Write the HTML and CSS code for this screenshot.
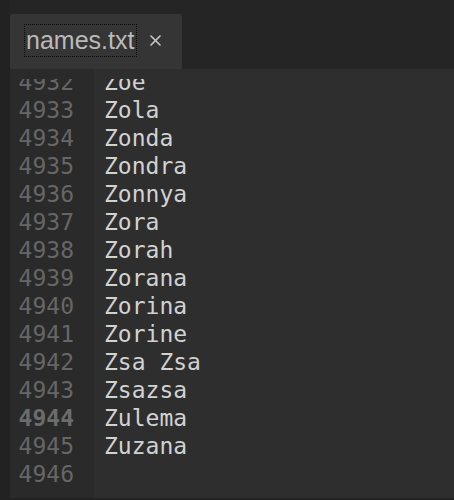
FILE: index.html
```html
<!DOCTYPE html>
<html>
<head>
<meta charset="utf-8">
<link rel="stylesheet" href="styles.css">
</head>
<body>
<div class="window">
  <div class="sidebar-edge"></div>
  <div class="main">
    <div class="tabbar">
      <div class="tab">
        <span class="tab-title">names.txt</span>
        <svg class="tab-close" width="11" height="11" viewBox="0 0 11 11"><path d="M1 1L10 10M10 1L1 10" stroke="#c9c9c9" stroke-width="1.6" stroke-linecap="round"/></svg>
      </div>
    </div>
    <div class="editor">
      <div class="viewport">
        <div class="lines">
          <div class="line"><span class="num">4932</span><span class="text">Zoe</span></div>
          <div class="line"><span class="num">4933</span><span class="text">Zola</span></div>
          <div class="line"><span class="num">4934</span><span class="text">Zonda</span></div>
          <div class="line"><span class="num">4935</span><span class="text">Zondra</span></div>
          <div class="line"><span class="num">4936</span><span class="text">Zonnya</span></div>
          <div class="line"><span class="num">4937</span><span class="text">Zora</span></div>
          <div class="line"><span class="num">4938</span><span class="text">Zorah</span></div>
          <div class="line"><span class="num">4939</span><span class="text">Zorana</span></div>
          <div class="line"><span class="num">4940</span><span class="text">Zorina</span></div>
          <div class="line"><span class="num">4941</span><span class="text">Zorine</span></div>
          <div class="line"><span class="num">4942</span><span class="text">Zsa Zsa</span></div>
          <div class="line"><span class="num">4943</span><span class="text">Zsazsa</span></div>
          <div class="line current"><span class="num">4944</span><span class="text">Zulema</span></div>
          <div class="line"><span class="num">4945</span><span class="text">Zuzana</span></div>
          <div class="line"><span class="num">4946</span><span class="text"></span></div>
        </div>
      </div>
    </div>
  </div>
</div>
</body>
</html>
```
FILE: styles.css
```css
* { box-sizing: border-box; }
html, body { margin: 0; padding: 0; }
body { background: #252525; width: 454px; height: 500px; overflow: hidden; }

.window {
  display: grid;
  grid-template-columns: 10px 1fr;
  width: 454px;
  height: 500px;
  border-bottom: 2px solid #222;
}
.sidebar-edge { background: #222222; }

.main { display: flex; flex-direction: column; min-height: 0; }

.tabbar {
  height: 69px;
  padding-top: 14px;
  background: #252525;
  display: flex;
}
.tab {
  width: 172px;
  height: 55px;
  background: #353535;
  border-radius: 3px 3px 0 0;
  display: flex;
  align-items: flex-start;
  padding: 10px 0 0 14px;
}
.tab-title {
  font-family: "Liberation Sans", Arial, sans-serif;
  font-size: 25px;
  line-height: 33px;
  height: 33px;
  padding: 0 3px 0 2px;
  color: #bababa;
  outline: 1px dotted #0c0c0c;
  outline-offset: -1px;
}
.tab-close { margin: 11px 0 0 13px; }

.editor {
  flex: 1;
  min-height: 0;
  padding-top: 10px;
  background: linear-gradient(to right, #2a2a2a 84px, #2e2e2e 84px);
  display: flex;
  flex-direction: column;
}
.viewport { flex: 1; overflow: hidden; }
.lines { margin-top: -11px; }

.line {
  display: grid;
  grid-template-columns: 84px 1fr;
  height: 28px;
  font-family: "DejaVu Sans Mono", Menlo, monospace;
  font-size: 23px;
  line-height: 28px;
}
.num {
  text-align: right;
  padding-right: 20px;
  color: #666666;
}
.text {
  padding-left: 10px;
  color: #d2d2d2;
  white-space: pre;
}
.current .num { font-weight: bold; color: #6c6c6c; }
```
